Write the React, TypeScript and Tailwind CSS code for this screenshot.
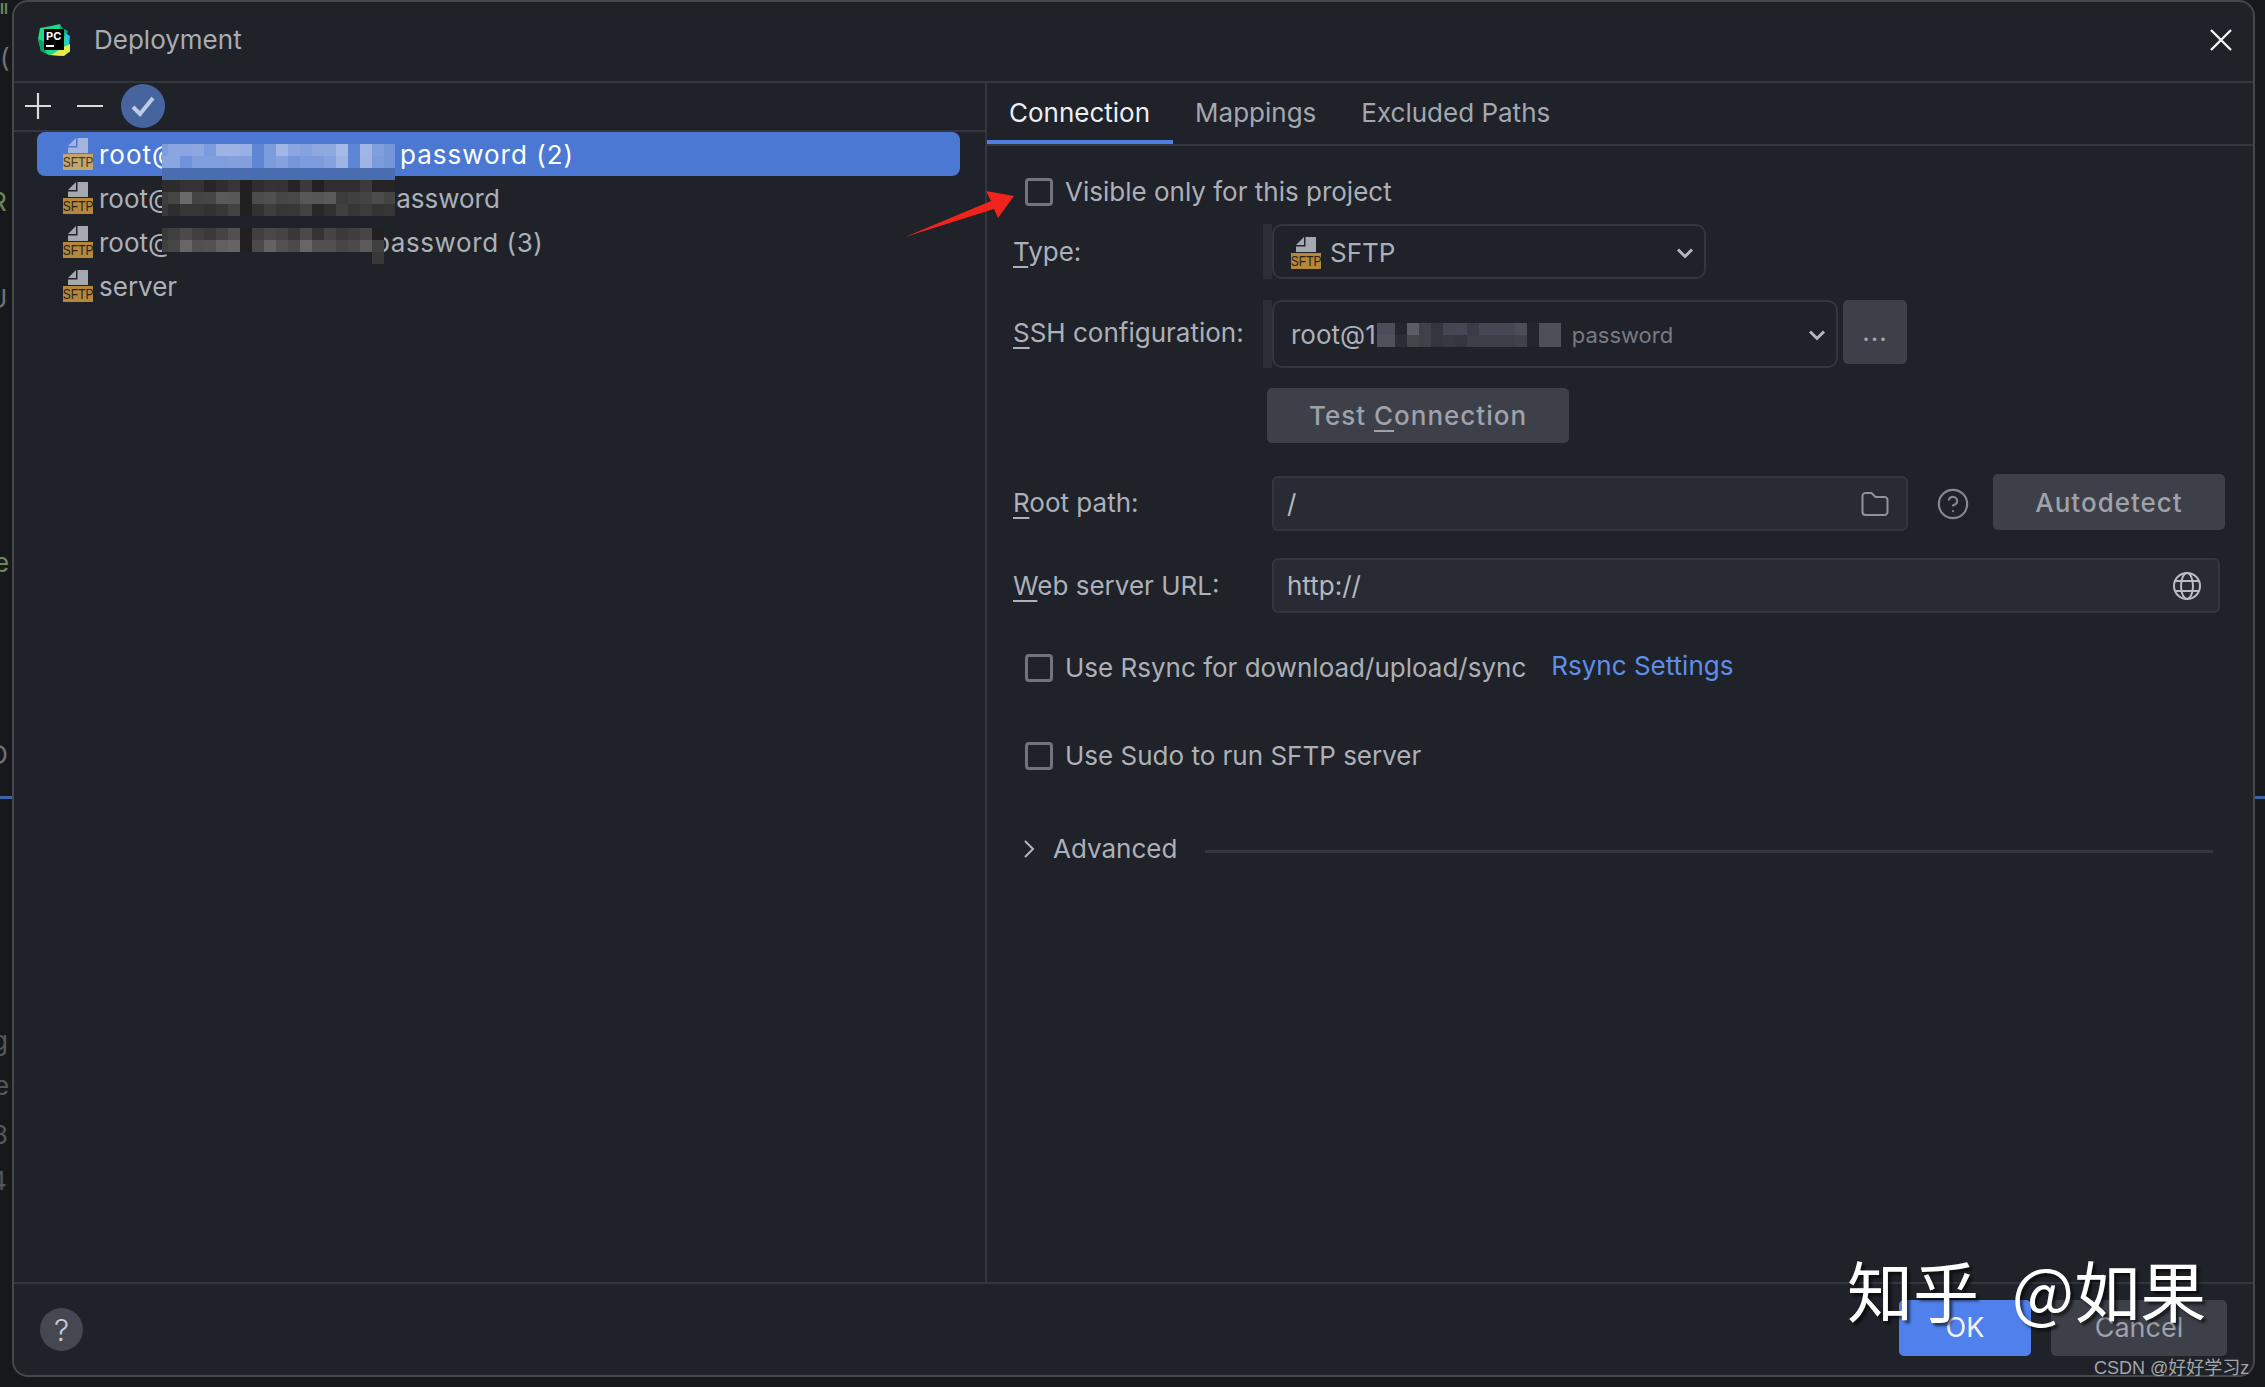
import React from 'react';
import { CircleHelp } from 'lucide-react';

// mosaic colours, two hex digits = grey level, full hex = used as is
const row1 = [
  ['#7f9cdb', '#8aa5df', '#8aa5df', '#8da7e0', '#7a9bdc', '#9db3e4', '#9db3e4', '#98afe3', '#5f86d5', '#7b9bdc', '#a1b6e6', '#8aa5df', '#86a2de', '#8fa9e0', '#8fa9e0', '#a6bae7', '#5f86d5', '#a0b5e5', '#7f9edd', '#7595da'],
  ['#8aa5df', '#8aa5df', '#6e93da', '#7f9edd', '#7f9edd', '#7f9edd', '#83a0dd', '#83a0dd', '#5f86d5', '#7b9bdc', '#86a2de', '#7595da', '#7b9bdc', '#7b9bdc', '#86a2de', '#9fb4e5', '#5f86d5', '#9fb4e5', '#7b9bdc', '#7595da'],
  Array(20).fill('#4a6cb0'),
];
const row2 = [
  ['2c', '2c', '33', '33', '26', '2e', '36', '20', '2e', '34', '33', '25', '3a', '21', '2f', '2f', '2f', '3b', '24', '24'],
  ['3e', '46', '6a', '44', '46', '5a', '58', '20', '4c', '50', '46', '48', '58', '56', '5a', '3c', '40', '44', '4c', '44'],
  ['3a', '2e', '36', '36', '32', '38', '42', '20', '32', '3e', '36', '38', '42', '28', '30', '40', '36', '3c', '34', '36'],
];
const row3 = [
  ['3a', '40', '4a', '40', '3a', '44', '50', '20', '40', '48', '44', '38', '4a', '34', '44', '3a', '3e', '46', '20', ''],
  ['40', '46', '66', '50', '52', '60', '64', '20', '4a', '62', '52', '4a', '66', '50', '50', '46', '4a', '5a', '40', ''],
  ['', '', '', '', '', '', '', '', '', '', '', '', '', '', '', '', '', '', '38', ''],
];
const sshMosaic = [
  ['#4a4e58', '#4a4e58', '#24262d', '#5a5d64', '#3e4149', '#33363d', '#424650', '#444852', '#3a3d45', '#444852', '#444852', '#444852', '#4c4e55', '#24262d', '#4e5058', '#4e5058'],
  ['#4f5258', '#4f5258', '#2c2e35', '#44464c', '#3e4149', '#33363d', '#363940', '#33363d', '#3c3f46', '#3c3f46', '#3c3f46', '#3c3f46', '#404249', '#24262d', '#4e5058', '#4e5058'],
];

const shade = (c: string) => (c === '' ? 'transparent' : c[0] === '#' ? c : `#${c}${c}${c}`);

function Mosaic({ rows, className }: { rows: string[][]; className: string }) {
  return (
    <div className={`overflow-hidden ${className}`}>
      {rows.map((cells, i) => (
        <div key={i} className="flex h-[12px] ml-[-6px]">
          {cells.map((c, j) => (
            <div key={j} className="w-[12px] h-[12px] shrink-0" style={{ background: shade(c) }} />
          ))}
        </div>
      ))}
    </div>
  );
}

function SftpIcon({ selected }: { selected?: boolean }) {
  return (
    <div className="w-[30px] h-[32px] shrink-0 flex flex-col items-center">
      <svg width="20" height="16" viewBox="0 0 20 16" className={selected ? 'text-[#a3b5dd]' : 'text-[#a4a8b0]'}>
        <polygon points="8,0 8,8 0,8" fill="currentColor" />
        <polygon points="9.5,0 20,0 20,15 0,15 0,9.5 9.5,9.5" fill="currentColor" />
      </svg>
      <div
        className={`w-[30px] h-[16px] flex items-center justify-center overflow-hidden font-['Liberation_Sans',sans-serif] ${
          selected ? 'bg-[#c5a56e] text-[#4a3a1e]' : 'bg-[#b5873c] text-[#2a2418]'
        }`}
      >
        <span className="inline-block text-[15px] leading-[16px] scale-x-[0.8]">SFTP</span>
      </div>
    </div>
  );
}

function PcLogo() {
  return (
    <svg width="34" height="34" viewBox="0 0 34 34" className="shrink-0">
      <polygon points="3,5 14,3 23,1 25,5 30,9 28,14 33,22 33,29 24,33 12,32 4,28 1,16" fill="#21d789" />
      <polygon points="22,1 25,5 31,8 29,14 24,12" fill="#12a87a" />
      <polygon points="28,10 33,13 32,22 28,20" fill="#26c4e8" />
      <polygon points="14,32 27,33 33,28 33,21 27,24" fill="#e6ec4c" />
      <polygon points="1,16 4,28 10,31 6,18" fill="#0fa06f" />
      <rect x="7" y="6" width="20" height="21" fill="#000" />
      <text x="9" y="17" fontSize="11" fontWeight="700" fill="#fff" fontFamily="Inter, sans-serif">
        PC
      </text>
      <rect x="9" y="22" width="8" height="2" fill="#fff" />
    </svg>
  );
}

function Chevron() {
  return (
    <svg width="18" height="12" viewBox="0 0 18 12" className="block shrink-0">
      <path d="M2 2.5 L9 9.5 L16 2.5" fill="none" stroke="#b4b7bd" strokeWidth="3" />
    </svg>
  );
}

function Check() {
  return <div className="w-[28px] h-[28px] shrink-0 rounded-[4px] border-[3px] border-[#70747c]" />;
}

function Label({ mark, rest }: { mark: string; rest: string }) {
  return (
    <div className="w-[276px] pl-[26px] shrink-0 text-[#acb0b8]">
      <span className="underline underline-offset-[5px] decoration-2">{mark}</span>
      {rest}
    </div>
  );
}

const servers = [
  { tail: 'password (2)', w: 'w-[301px] tracking-[1px]', spacing: 'tracking-[1px]', selected: true },
  { tail: 'password', w: 'w-[281px]', spacing: '' },
  { tail: 'password (3)', w: 'w-[275px]', spacing: 'tracking-[0.6px]' },
];

function App() {
  return (
    <div className="relative w-[2265px] h-[1387px] overflow-hidden bg-[#17181b] text-[26px] leading-[28px] font-['Inter',sans-serif]">
      {/* editor behind the dialog, only a sliver shows */}
      <div className="absolute top-[2px] left-0 text-[14px] leading-[14px] font-bold text-[#6a8759]">II</div>
      <div className="absolute top-[44px] left-[0px] text-[#6f7278]">(</div>
      <div className="absolute top-[188px] left-[-10px] text-[#6a8759]">R</div>
      <div className="absolute top-[285px] left-[-12px] text-[#6f7278]">U</div>
      <div className="absolute top-[549px] left-[-6px] text-[#6a8759]">e</div>
      <div className="absolute top-[741px] left-[-12px] text-[#6f7278]">O</div>
      <div className="absolute top-[796px] left-0 w-full h-[3px] bg-[#3d63a8]" />
      <div className="absolute top-[1027px] left-[-8px] text-[#55585e]">g</div>
      <div className="absolute top-[1072px] left-[-6px] text-[#55585e]">e</div>
      <div className="absolute top-[1121px] left-[-8px] text-[#55585e]">8</div>
      <div className="absolute top-[1167px] left-[-10px] text-[#55585e]">4</div>

      {/* dialog */}
      <div className="relative ml-[12px] w-[2243px] h-[1377px] flex flex-col border-2 border-[#45474c] rounded-[16px] bg-[#1f2229] overflow-hidden">
        <div className="h-[81px] shrink-0 flex items-center pl-[23px] pr-[21px] pb-[4px] border-b-2 border-[#33363c]">
          <PcLogo />
          <span className="ml-[23px] text-[#a8acb4]">Deployment</span>
          <svg width="22" height="22" viewBox="0 0 22 22" className="ml-auto">
            <path d="M1 1 L21 21 M21 1 L1 21" stroke="#f2f3f5" strokeWidth="2.4" fill="none" />
          </svg>
        </div>

        <div className="flex-1 flex min-h-0">
          {/* left: server list */}
          <div className="w-[973px] shrink-0 border-r-2 border-[#33363c] flex flex-col">
            <div className="h-[49px] shrink-0 flex items-center pl-[11px] pb-[2px] border-b-2 border-[#33363c]">
              <svg width="26" height="26" viewBox="0 0 26 26">
                <path d="M13 0 V26 M0 13 H26" stroke="#d8dade" strokeWidth="2.2" />
              </svg>
              <svg width="26" height="26" viewBox="0 0 26 26" className="ml-[26px]">
                <path d="M0 13 H26" stroke="#d8dade" strokeWidth="2.2" />
              </svg>
              <div className="ml-[18px] w-[44px] h-[44px] rounded-full bg-[#46659f] flex items-center justify-center">
                <svg width="26" height="22" viewBox="0 0 26 22">
                  <path d="M3 12 L10 19 L23 3" fill="none" stroke="#bccbe8" strokeWidth="4" />
                </svg>
              </div>
            </div>
            <div className="pl-[23px] pr-[25px]">
              {servers.map((s) => (
                <div
                  key={s.tail}
                  className={`h-[44px] flex items-center pl-[26px] ${
                    s.selected ? 'bg-[#4b78d2] rounded-[8px] text-white' : 'text-[#acb0b8]'
                  }`}
                >
                  <SftpIcon selected={s.selected} />
                  <span className={`ml-[6px] pt-[2px] shrink-0 ${s.w}`}>root@</span>
                  <span className={`pt-[2px] ${s.spacing}`}>{s.tail}</span>
                </div>
              ))}
              <div className="h-[44px] flex items-center pl-[26px] text-[#acb0b8]">
                <SftpIcon />
                <span className="ml-[6px] pt-[2px]">server</span>
              </div>
            </div>
          </div>

          {/* right: connection form */}
          <div className="flex-1 min-w-0 flex flex-col">
            <div className="h-[63px] shrink-0 border-b-2 border-[#33363c] flex items-start">
              <div className="h-[61px] flex items-center pl-[22px] pr-[23px] pt-[2px] border-b-4 border-[#4f80e0] text-[#eceef1]">Connection</div>
              <div className="h-[61px] flex items-center px-[22px] pt-[2px] pb-[4px] text-[#a2a7b0]">Mappings</div>
              <div className="h-[61px] flex items-center px-[23px] pt-[2px] pb-[4px] text-[#a2a7b0]">Excluded Paths</div>
            </div>

            <div className="mt-[32px] ml-[38px] flex items-center text-[#acb0b8]">
              <Check />
              <span className="ml-[12px]">Visible only for this project</span>
            </div>

            <div className="mt-[18px] h-[55px] flex items-center">
              <Label mark="T" rest="ype:" />
              <div className="w-[443px] h-full flex">
                <div className="w-[9px] bg-[#2c2f36]" />
                <div className="flex-1 flex items-center pl-[17px] pr-[10px] pt-[2px] border-2 border-[#33363d] rounded-[10px] text-[#acb0b8]">
                  <SftpIcon />
                  <span className="ml-[9px]">SFTP</span>
                  <span className="ml-auto"><Chevron /></span>
                </div>
              </div>
            </div>

            <div className="mt-[21px] h-[68px] flex items-start">
              <div className="h-[66px] flex items-center"><Label mark="S" rest="SH configuration:" /></div>
              <div className="w-[575px] h-full flex">
                <div className="w-[9px] bg-[#2c2f36]" />
                <div className="flex-1 flex items-center pl-[17px] pr-[10px] pt-[2px] border-2 border-[#33363d] rounded-[10px] text-[#acb0b8]">
                  <span>root@1</span>
                  <Mosaic rows={sshMosaic} className="ml-[1px] w-[184px] h-[24px]" />
                  <span className="ml-[11px] text-[22px] text-[#777b83]">password</span>
                  <span className="ml-auto"><Chevron /></span>
                </div>
              </div>
              <div className="ml-[5px] w-[64px] h-[64px] rounded-[5px] bg-[#3d4048] flex items-center justify-center text-[26px] tracking-[1px] text-[#a4a8b0]">...</div>
            </div>

            <div className="mt-[20px] ml-[280px] w-[302px] h-[55px] pt-[1px] rounded-[5px] bg-[#3d4048] flex items-center justify-center text-[#9da2ab] tracking-[1px] font-medium">
              <span>Test <span className="underline underline-offset-[5px] decoration-2">C</span>onnection</span>
            </div>

            <div className="mt-[31px] h-[57px] flex items-start">
              <div className="h-[57px] flex items-center"><Label mark="R" rest="oot path:" /></div>
              <div className="mt-[2px] ml-[9px] w-[636px] h-[55px] flex items-center pl-[13px] pr-[17px] rounded-[6px] border-2 border-[#33363d] bg-[#282b33] text-[#b4b8bf]">
                <span>/</span>
                <svg width="28" height="26" viewBox="0 0 28 26" className="ml-auto">
                  <path d="M1.5 5 a3 3 0 0 1 3-3 h6 l4 4 h9 a3 3 0 0 1 3 3 v12 a3 3 0 0 1-3 3 h-19 a3 3 0 0 1-3-3 z" fill="none" stroke="#8f939b" strokeWidth="2" />
                </svg>
              </div>
              <CircleHelp className="mt-[13px] ml-[28px] w-[34px] h-[34px] text-[#85898f]" strokeWidth={1.5} />
              <div className="ml-[23px] w-[232px] h-[56px] pt-[1px] rounded-[5px] bg-[#3d4048] flex items-center justify-center text-[#9da2ab] tracking-[1px] font-medium">Autodetect</div>
            </div>

            <div className="mt-[27px] h-[55px] flex items-center">
              <Label mark="W" rest="eb server URL:" />
              <div className="ml-[9px] w-[948px] h-full flex items-center pl-[13px] pr-[16px] rounded-[6px] border-2 border-[#33363d] bg-[#282b33] text-[#b4b8bf]">
                <span>http://</span>
                <svg width="30" height="30" viewBox="0 0 30 30" className="ml-auto">
                  <g fill="none" stroke="#b9bcc2" strokeWidth="2">
                    <circle cx="15" cy="15" r="13" />
                    <ellipse cx="15" cy="15" rx="6" ry="13" />
                    <path d="M3.5 10 H26.5 M3.5 20 H26.5" />
                  </g>
                </svg>
              </div>
            </div>

            <div className="mt-[41px] ml-[38px] flex items-center text-[#acb0b8]">
              <Check />
              <span className="ml-[12px]">Use Rsync for download/upload/sync</span>
              <span className="ml-[25px] mt-[-4px] text-[#5f8ee8]">Rsync Settings</span>
            </div>

            <div className="mt-[60px] ml-[38px] flex items-center text-[#acb0b8]">
              <Check />
              <span className="ml-[12px]">Use Sudo to run SFTP server</span>
            </div>

            <div className="mt-[65px] ml-[36px] mr-[40px] flex items-center text-[#acb0b8]">
              <svg width="12" height="20" viewBox="0 0 12 20" className="shrink-0">
                <path d="M2 2 L10 10 L2 18" fill="none" stroke="#b4b7bd" strokeWidth="2" />
              </svg>
              <span className="ml-[18px]">Advanced</span>
              <div className="ml-[28px] mt-[4px] flex-1 h-[3px] bg-[#34373e]" />
            </div>
          </div>
        </div>

        <div className="h-[93px] shrink-0 border-t-2 border-[#33363c] flex items-center pl-[26px] pr-[26px] pb-[3px]">
          <div className="w-[43px] h-[43px] mt-[3px] rounded-full bg-[#454850] flex items-center justify-center text-[#c9ccd2] text-[30px] font-light">?</div>
          <div className="ml-auto w-[132px] h-[56px] rounded-[5px] bg-[#4f80ec] flex items-center justify-center text-[27px] text-[#f1f4fb]">OK</div>
          <div className="ml-[20px] w-[176px] h-[56px] rounded-[5px] bg-[#3d4048] flex items-center justify-center text-[27px] text-[#9da2ab]">Cancel</div>
        </div>
      </div>

      {/* pixelated addresses painted over the list */}
      <Mosaic rows={row1} className="absolute left-[162px] top-[144px] w-[233px] h-[36px]" />
      <Mosaic rows={row2} className="absolute left-[162px] top-[180px] w-[233px] h-[36px]" />
      <Mosaic rows={row3} className="absolute left-[162px] top-[228px] w-[233px] h-[36px]" />

      {/* red arrow */}
      <svg width="112" height="50" viewBox="0 0 112 50" className="absolute left-[904px] top-[190px]">
        <polygon points="1,47 87,11 82,1 110,6 94,28 90,19" fill="#f0241c" />
      </svg>

      {/* image watermarks */}
      <div className="absolute left-[1847px] top-[1242px] text-[66px] leading-[92px] text-white whitespace-nowrap [word-spacing:18px] font-['Noto_Sans_CJK_SC',sans-serif] [text-shadow:3px_3px_3px_rgba(0,0,0,0.6)]">
        知乎 @如果
      </div>
      <div className="absolute left-[2094px] top-[1356px] text-[18px] leading-[24px] text-[#a4a6aa] whitespace-nowrap font-['Liberation_Sans','Noto_Sans_CJK_SC',sans-serif]">
        CSDN @好好学习z
      </div>
    </div>
  );
}

export default App;
